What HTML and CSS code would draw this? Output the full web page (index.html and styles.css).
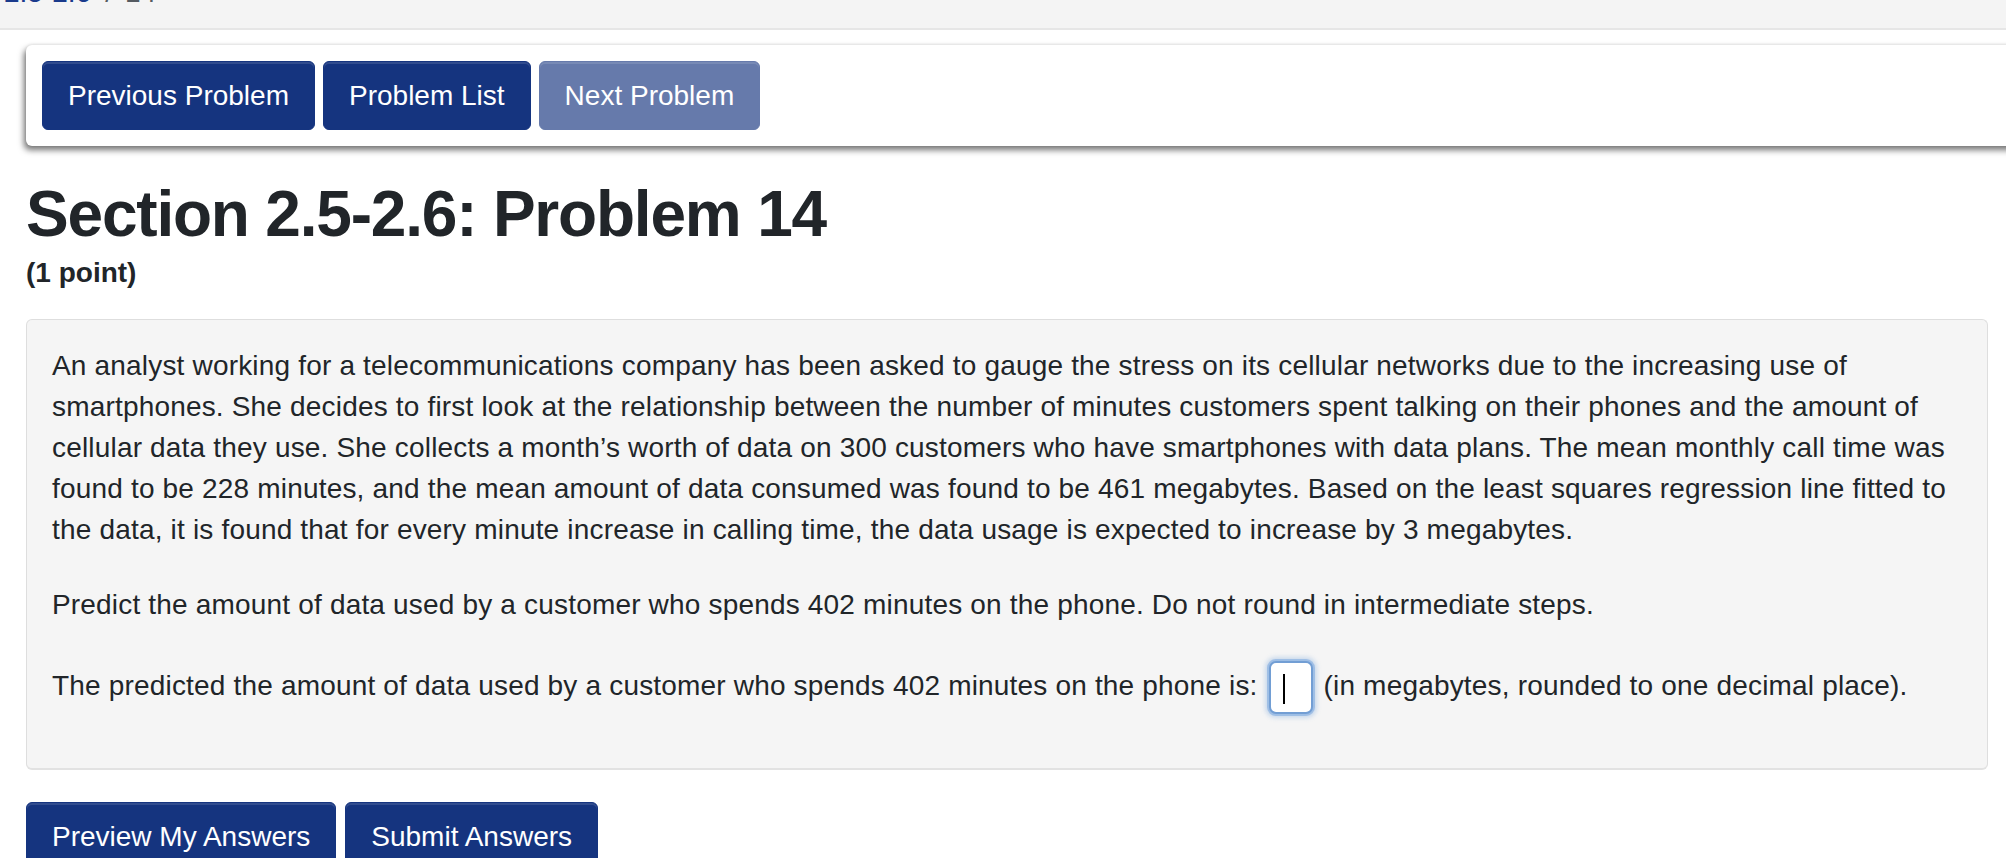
FILE: index.html
```html
<!DOCTYPE html>
<html lang="en">
<head>
<meta charset="utf-8">
<title>Section 2.5-2.6: Problem 14</title>
<link rel="stylesheet" href="styles.css">
</head>
<body>
<div class="topbar">
  <div class="crumbs"><span class="crumb-link">2.5-2.6</span><span class="crumb-sep">/</span><span class="crumb-cur">14</span></div>
</div>
<main class="page">
  <nav class="navcard">
    <a class="btn">Previous Problem</a>
    <a class="btn">Problem List</a>
    <a class="btn btn-disabled">Next Problem</a>
  </nav>
  <h2 class="title">Section 2.5-2.6: Problem 14</h2>
  <div class="points">(1 point)</div>
  <div class="problem">
    <p>An analyst working for a telecommunications company has been asked to gauge the stress on its cellular networks due to the increasing use of smartphones. She decides to first look at the relationship between the number of minutes customers spent talking on their phones and the amount of cellular data they use. She collects a month’s worth of data on 300 customers who have smartphones with data plans. The mean monthly call time was found to be 228 minutes, and the mean amount of data consumed was found to be 461 megabytes. Based on the least squares regression line fitted to the data, it is found that for every minute increase in calling time, the data usage is expected to increase by 3 megabytes.</p>
    <p class="p-predict">Predict the amount of data used by a customer who spends 402 minutes on the phone. Do not round in intermediate steps.</p>
    <p class="p-answer">The predicted the amount of data used by a customer who spends 402 minutes on the phone is: <span class="answer"><span class="caret"></span></span> (in megabytes, rounded to one decimal place).</p>
  </div>
  <div class="actions">
    <a class="btn">Preview My Answers</a>
    <a class="btn">Submit Answers</a>
  </div>
</main>
</body>
</html>
```

FILE: styles.css
```css
html, body {
  margin: 0;
  padding: 0;
  background: #ffffff;
  font-family: "Liberation Sans", Arial, sans-serif;
  font-size: 28px;
  line-height: 41px;
  color: #212529;
  overflow: hidden;
}

.topbar {
  height: 28px;
  background: #f4f4f4;
  border-bottom: 2px solid #e6e6e6;
  overflow: hidden;
}

.crumbs {
  margin-top: -28px;
  padding-left: 4px;
  white-space: nowrap;
}

.crumb-link { color: #1a3a8c; }
.crumb-sep { color: #555b61; margin: 0 12px 0 14px; }
.crumb-cur { color: #555b61; }

.page {
  padding: 15px 18px 0 26px;
}

.navcard {
  display: flex;
  gap: 8px;
  margin-right: -80px;
  padding: 16px 16px;
  background: #ffffff;
  border-radius: 6px;
  box-shadow: -2px 4px 6px rgba(0, 0, 0, 0.55), 0 -1px 3px rgba(0, 0, 0, 0.08);
}

.btn {
  display: inline-block;
  padding: 13px 25px;
  line-height: 41px;
  font-size: 28px;
  color: #ffffff;
  background: #15347f;
  border: 1px solid #15347f;
  border-radius: 6px;
  box-shadow: inset 0 2px 0 rgba(255, 255, 255, 0.12);
  white-space: nowrap;
  cursor: pointer;
}

.btn-disabled {
  opacity: 0.65;
}

.title {
  margin: 30px 0 0 0;
  font-size: 64px;
  line-height: 76px;
  letter-spacing: -1.2px;
  font-weight: bold;
}

.points {
  margin-top: 1px;
  font-size: 28px;
  line-height: 39px;
  font-weight: bold;
}

.problem {
  margin-top: 27px;
  padding: 25px;
  background: #f5f5f5;
  border: 1px solid #dedede;
  border-bottom: 2px solid #e2e2e2;
  border-radius: 6px;
  letter-spacing: 0.18px;
}

.problem p {
  margin: 0 0 34px 0;
}

.problem .p-predict {
  margin-bottom: 36px;
}

.problem .p-answer {
  margin-bottom: 29px;
}

.answer {
  display: inline-flex;
  align-items: flex-start;
  box-sizing: border-box;
  width: 44px;
  height: 53px;
  margin: 0 3px 0 3px;
  padding: 11px 0 0 12px;
  vertical-align: middle;
  background: #ffffff;
  border: 2px solid #729ed4;
  border-radius: 7px;
  box-shadow: 0 0 0 2px rgba(120, 165, 222, 0.55), 0 0 4px 4px rgba(120, 165, 222, 0.35);
}

.caret {
  display: block;
  width: 2px;
  height: 30px;
  background: #000000;
}

.actions {
  display: flex;
  gap: 9px;
  margin-top: 32px;
}
```
